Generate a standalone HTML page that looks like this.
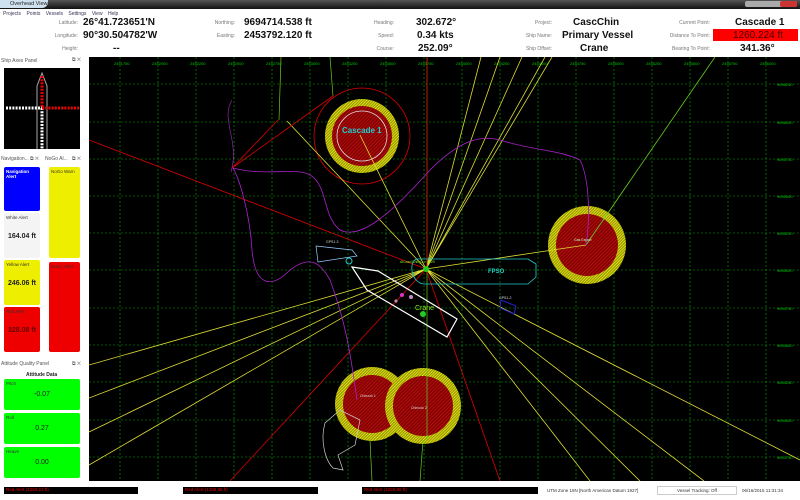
<!DOCTYPE html>
<html><head><meta charset="utf-8"><style>
*{margin:0;padding:0;box-sizing:border-box}
body{width:800px;height:500px;overflow:hidden;background:#fff;font-family:"Liberation Sans",sans-serif;position:relative}
.a{position:absolute;white-space:nowrap}
.lb{font-size:5px;color:#777;text-align:right}
.v{font-size:10px;font-weight:bold;color:#111}
.pt{font-size:5px;color:#555}
.box{position:absolute;border-radius:2px}
.bt{position:absolute;font-size:4.5px;color:#333;left:2px;top:2px}
.bv{position:absolute;font-size:7px;font-weight:bold;color:#222;width:100%;text-align:center}
</style></head><body>
<div class="a" style="left:0;top:0;width:800px;height:9px;background:linear-gradient(#555,#111)"></div>
<div class="a" style="left:0;top:0;width:48px;height:8px;background:#cfe0ee;border-radius:0 0 6px 0"></div>
<div class="a" style="left:10px;top:1px;font-size:5.5px;color:#222">Overhead View</div>
<div class="a" style="left:745px;top:1px;width:52px;height:6px;background:#aaa;border-radius:2px"></div>
<div class="a" style="left:780px;top:1px;width:17px;height:6px;background:#c33;border-radius:2px"></div>
<div class="a" style="left:3px;top:11px;font-size:5px;color:#335;word-spacing:4px">Projects Points Vessels Settings View Help</div>

<div class="a lb" style="left:40px;top:20px;width:38px">Latitude:</div><div class="a v" style="left:83px;top:17px">26°41.723651'N</div>
<div class="a lb" style="left:40px;top:33px;width:38px">Longitude:</div><div class="a v" style="left:83px;top:30px">90°30.504782'W</div>
<div class="a lb" style="left:40px;top:46px;width:38px">Height:</div><div class="a v" style="left:113px;top:43px">--</div>
<div class="a lb" style="left:195px;top:20px;width:40px">Northing:</div><div class="a v" style="left:244px;top:17px">9694714.538 ft</div>
<div class="a lb" style="left:195px;top:33px;width:40px">Easting:</div><div class="a v" style="left:244px;top:30px">2453792.120 ft</div>
<div class="a lb" style="left:350px;top:20px;width:44px">Heading:</div><div class="a v" style="left:416px;top:17px">302.672°</div>
<div class="a lb" style="left:350px;top:33px;width:44px">Speed:</div><div class="a v" style="left:417px;top:30px">0.34 kts</div>
<div class="a lb" style="left:350px;top:46px;width:44px">Course:</div><div class="a v" style="left:418px;top:43px">252.09°</div>
<div class="a lb" style="left:510px;top:20px;width:42px">Project:</div><div class="a v" style="left:573px;top:17px">CascChin</div>
<div class="a lb" style="left:510px;top:33px;width:42px">Ship Name:</div><div class="a v" style="left:562px;top:30px">Primary Vessel</div>
<div class="a lb" style="left:510px;top:46px;width:42px">Ship Offset:</div><div class="a v" style="left:580px;top:43px">Crane</div>
<div class="a lb" style="left:660px;top:20px;width:50px">Current Point:</div><div class="a v" style="left:735px;top:17px">Cascade 1</div>
<div class="a lb" style="left:660px;top:33px;width:50px">Distance To Point:</div>
<div class="a" style="left:713px;top:29px;width:85px;height:12px;background:#f00"></div><div class="a v" style="left:733px;top:30px;color:#400;font-weight:normal">1260.224 ft</div>
<div class="a lb" style="left:660px;top:46px;width:50px">Bearing To Point:</div><div class="a v" style="left:740px;top:43px">341.36°</div>

<div class="a pt" style="left:1px;top:58px">Ship Axes Panel</div><div class="a pt" style="left:72px;top:57px">⧉ ✕</div>
<div class="a" style="left:4px;top:68px;width:76px;height:81px;background:#000"></div>
<svg class="a" style="left:4px;top:68px" width="76" height="81"><path d="M33 81V18L38 5L43 18V81" fill="none" stroke="#aaa" stroke-width="1"/><line x1="38" y1="8" x2="38" y2="40" stroke="#e00" stroke-width="3" stroke-dasharray="2 1.2"/><line x1="38" y1="40" x2="38" y2="81" stroke="#fff" stroke-width="3" stroke-dasharray="2 1.2"/><line x1="2" y1="40" x2="38" y2="40" stroke="#fff" stroke-width="3" stroke-dasharray="2 1.2"/><line x1="38" y1="40" x2="75" y2="40" stroke="#e00" stroke-width="3" stroke-dasharray="2 1.2"/></svg>
<div class="a pt" style="left:1px;top:156px">Navigation...</div><div class="a pt" style="left:30px;top:156px">⧉ ✕</div>
<div class="a pt" style="left:45px;top:156px">NoGo Al...</div><div class="a pt" style="left:72px;top:156px">⧉ ✕</div>
<div class="box" style="left:4px;top:167px;width:36px;height:44px;background:#00f"><span class="bt" style="color:#fff;font-weight:bold">Navigation Alert</span></div>
<div class="box" style="left:4px;top:213px;width:36px;height:45px;background:#f4f4f4"><span class="bt">White Alert</span><span class="bv" style="top:20px">164.04 ft</span></div>
<div class="box" style="left:4px;top:260px;width:36px;height:45px;background:#ee0"><span class="bt">Yellow Alert</span><span class="bv" style="top:20px">246.06 ft</span></div>
<div class="box" style="left:4px;top:307px;width:36px;height:45px;background:#e00"><span class="bt">Red Alert</span><span class="bv" style="top:20px;color:#600">328.08 ft</span></div>
<div class="box" style="left:49px;top:167px;width:31px;height:91px;background:#ee0"><span class="bt">NoGo Warn</span></div>
<div class="box" style="left:49px;top:262px;width:31px;height:90px;background:#e00"><span class="bt">NoGo Alert</span></div>
<div class="a pt" style="left:1px;top:361px">Attitude Quality Panel</div><div class="a pt" style="left:72px;top:361px">⧉ ✕</div>
<div class="a" style="left:26px;top:372px;font-size:5px;font-weight:bold;color:#222">Attitude Data</div>
<div class="box" style="left:4px;top:379px;width:76px;height:31px;background:#0f0"><span class="bt">Pitch</span><span class="bv" style="top:12px;font-weight:normal">-0.07</span></div>
<div class="box" style="left:4px;top:413px;width:76px;height:31px;background:#0f0"><span class="bt">Roll</span><span class="bv" style="top:12px;font-weight:normal">0.27</span></div>
<div class="box" style="left:4px;top:447px;width:76px;height:31px;background:#0f0"><span class="bt">Heave</span><span class="bv" style="top:12px;font-weight:normal">0.00</span></div>

<svg class="a" style="left:89px;top:57px" width="711" height="424" viewBox="89 57 711 424">
<rect x="89" y="57" width="711" height="424" fill="#000"/>
<g stroke="#0a0" stroke-width="0.6" stroke-dasharray="2 2">
<path d="M120 57V481M158 57V481M196 57V481M234 57V481M272 57V481M310 57V481M348 57V481M386 57V481M424 57V481M462 57V481M500 57V481M538 57V481M576 57V481M614 57V481M652 57V481M690 57V481M728 57V481M766 57V481"/>
<path d="M89 84H800M89 122H800M89 159H800M89 196H800M89 233H800M89 270H800M89 308H800M89 345H800M89 382H800M89 420H800M89 457H800"/>
</g>
<g fill="#0c0" font-size="4">
<text x="114" y="65">2451750</text><text x="152" y="65">2452000</text><text x="190" y="65">2452250</text><text x="228" y="65">2452500</text><text x="266" y="65">2452750</text><text x="304" y="65">2453000</text><text x="342" y="65">2453250</text><text x="380" y="65">2453500</text><text x="418" y="65">2453750</text><text x="456" y="65">2454000</text><text x="494" y="65">2454250</text><text x="532" y="65">2454500</text><text x="570" y="65">2454750</text><text x="608" y="65">2455000</text><text x="646" y="65">2455250</text><text x="684" y="65">2455500</text><text x="722" y="65">2455750</text><text x="760" y="65">2456000</text>
<text x="777" y="86">9696250</text><text x="777" y="124">9696000</text><text x="777" y="161">9695750</text><text x="777" y="198">9695500</text><text x="777" y="235">9695250</text><text x="777" y="272">9695000</text><text x="777" y="310">9694750</text><text x="777" y="347">9694500</text><text x="777" y="384">9694250</text><text x="777" y="422">9694000</text><text x="777" y="459">9693750</text>
</g>
<defs><pattern id="h" width="2" height="2" patternUnits="userSpaceOnUse" patternTransform="rotate(45)"><rect width="2" height="2" fill="#990"/><line x1="0" y1="0" x2="0" y2="2" stroke="#ff2" stroke-width="1.2"/></pattern>
<pattern id="r" width="2.5" height="2.5" patternUnits="userSpaceOnUse" patternTransform="rotate(45)"><rect width="2.5" height="2.5" fill="#800"/><line x1="0" y1="0" x2="0" y2="2.5" stroke="#c22" stroke-width="0.9"/></pattern></defs>
<g>
<circle cx="362" cy="136" r="48" fill="none" stroke="#d00" stroke-width="0.8"/>
<circle cx="362" cy="136" r="37" fill="url(#h)"/><circle cx="362" cy="136" r="30" fill="url(#r)"/><circle cx="362" cy="136" r="25" fill="none" stroke="#ddd" stroke-width="0.8"/>
<ellipse cx="587" cy="245" rx="39" ry="39" fill="url(#h)"/><ellipse cx="587" cy="245" rx="31" ry="31" fill="url(#r)"/>
<circle cx="372" cy="404" r="37" fill="url(#h)"/><circle cx="372" cy="404" r="29" fill="url(#r)"/>
<circle cx="423" cy="406" r="38" fill="url(#h)"/><circle cx="423" cy="406" r="30" fill="url(#r)"/>
</g>
<g stroke="#dd3" stroke-width="0.8" fill="none">
<path d="M426 269L481 57M426 269L500 57M426 269L522 57M426 269L545 57M426 269L552 57M426 269L360 135M426 269L287 121M426 269L89 365M426 269L89 398M426 269L89 432M426 269L89 465M426 269L590 481M426 269L640 481M426 269L704 481M426 269L800 460M426 269L586 245"/>
</g>
<path d="M586 245L715 57" stroke="#6c2" stroke-width="0.8"/>
<path d="M330 57L333 96M281 57L279 120M372 481L370 440M420 481L423 440M427 57V440" stroke="#6c2" stroke-width="0.7" fill="none"/>
<g stroke="#d00" stroke-width="0.8" fill="none"><path d="M89 140L426 269M426 269L500 481M426 269L230 481M232 168L333 96M232 168L278 120M427 57V269"/></g>
<path d="M233 168C260 175 280 170 300 172C330 175 320 215 340 230C360 240 390 215 430 170C460 140 480 135 500 140C530 150 560 150 580 160C590 180 590 220 586 245M233 168C240 180 250 215 252 250C255 285 270 290 290 270C310 255 320 262 330 280C345 320 350 350 357 400" stroke="#a2c" stroke-width="0.8" fill="none"/>
<path d="M232 100C220 120 240 140 231 172" stroke="#a2c" stroke-width="0.6" fill="none"/>
<path d="M352 267L378 271L457 319L447 337L367 290Z" stroke="#fff" stroke-width="1.2" fill="none"/>
<path d="M418 259H528L536 264V277L528 284H425C410 284 408 259 418 259Z" stroke="#2cc" stroke-width="0.8" fill="none"/>
<path d="M316 246L352 250L357 256L318 262Z" stroke="#9cf" stroke-width="0.7" fill="none"/>
<path d="M501 300L516 306L514 314L500 308Z" stroke="#22c" stroke-width="1" fill="none"/>
<path d="M325 423C320 440 325 460 333 468L343 470L338 455L355 445L360 420L340 410Z" stroke="#ccc" stroke-width="0.7" fill="none"/>
<circle cx="426" cy="269" r="3" fill="#2c2"/><circle cx="423" cy="314" r="3" fill="#2c2"/><circle cx="349" cy="261" r="3" fill="none" stroke="#2cc"/>
<circle cx="402" cy="295" r="2" fill="#d3c"/><circle cx="411" cy="297" r="2" fill="#c8c"/><circle cx="396" cy="301" r="1.6" fill="#c8a"/>
<text x="342" y="133" fill="#2cc" font-size="8" font-weight="bold">Cascade 1</text>
<text x="488" y="273" fill="#2cc" font-size="6" font-weight="bold">FPSO</text>
<text x="415" y="310" fill="#8e2" font-size="7">Crane</text>
<text x="400" y="263" fill="#8e2" font-size="3.5">AlCasc/Chin(C &gt; 2229</text>
<text x="574" y="241" fill="#cfc" font-size="3.5">Gas Export</text>
<text x="326" y="243" fill="#ddd" font-size="3.5">GPS1-3</text>
<text x="499" y="299" fill="#ddd" font-size="3.5">GPS1-2</text>
<text x="360" y="397" fill="#ddd" font-size="3.5">Chinook 1</text>
<text x="411" y="409" fill="#ddd" font-size="3.5">Chinook 2</text>
</svg>

<div class="a" style="left:4px;top:487px;width:134px;height:7px;background:#000;color:#e00;font-size:4.5px;padding-left:2px">Red Alert (1260.22 ft)</div>
<div class="a" style="left:183px;top:487px;width:135px;height:7px;background:#000;color:#e00;font-size:4.5px;padding-left:2px">Red Alert (1259.98 ft)</div>
<div class="a" style="left:362px;top:487px;width:176px;height:7px;background:#000;color:#e00;font-size:4.5px;padding-left:2px">Red Alert (1259.86 ft)</div>
<div class="a" style="left:547px;top:488px;font-size:4.5px;color:#333">UTM Zone 15N [North American Datum 1927]</div>
<div class="a" style="left:657px;top:486px;width:80px;height:9px;border:1px solid #ccc;font-size:4.5px;color:#333;text-align:center;padding-top:1px">Vessel Tracking: Off</div>
<div class="a" style="left:742px;top:488px;font-size:4.5px;color:#333">06/16/2015 11:31:34</div>
</body></html>
